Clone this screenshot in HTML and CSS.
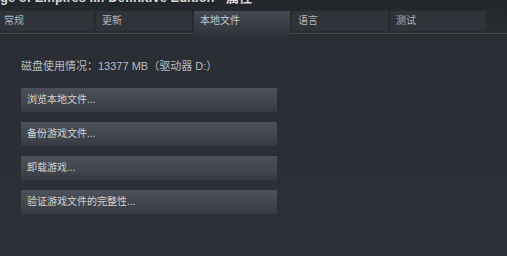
FILE: index.html
```html
<!DOCTYPE html>
<html lang="zh-CN">
<head>
  <meta charset="UTF-8" />
  <title>属性 - 本地文件</title>
  <link rel="stylesheet" href="styles.css">
</head>
<body>

  <!-- Título de la ventana (cortado) -->
  <div class="titulo">ge of Empires III: Definitive Edition - 属性</div>

  <!-- Pestañas -->
  <div class="tabs">
    <div class="tab">常规</div>
    <div class="tab">更新</div>
    <div class="tab active">本地文件</div>
    <div class="tab">语言</div>
    <div class="tab">测试</div>
  </div>

  <div class="contenido">
    <p class="disco">磁盘使用情况：13377 MB（驱动器 D:）</p>

    <div class="botones">
      <div class="boton">浏览本地文件...</div>
      <div class="boton">备份游戏文件...</div>
      <div class="boton">卸载游戏...</div>
      <div class="boton">验证游戏文件的完整性...</div>
    </div>
  </div>

</body>
</html>
```

FILE: styles.css
```css
body {
  margin: 0;
  padding: 0;
  font-family: "Liberation Sans", "Noto Sans CJK SC", sans-serif;
  background: linear-gradient(to bottom, #22252a 0px, #2a2d33 40px, #2d3137 256px);
  color: #b4b8bc;
  height: 256px;
  overflow: hidden;
}

/* Título cortado arriba */
.titulo {
  margin-top: -9px;
  height: 20px;
  line-height: 1;
  font-size: 13px;
  font-weight: bold;
  color: #d6d8da;
  overflow: hidden;
  white-space: nowrap;
}

/* Pestañas */
.tabs {
  display: flex;
  gap: 2px;
  height: 22px;
  border-bottom: 1px solid #44484e;
  margin-left: -2px;
}

.tab {
  width: 96px;
  height: 20px;
  background-color: #30343a;
  font-size: 10px;
  line-height: 20px;
  padding-left: 6px;
  box-sizing: border-box;
  color: #b0b6bc;
}

.tab.active {
  height: 30px;
  background: linear-gradient(to bottom, #454a52 0%, #353940 60%, #2a2d33 100%);
  color: #c8ccd0;
  position: relative;
  z-index: 1;
}

/* Contenido */
.contenido {
  padding: 0 21px;
}

.disco {
  margin: 24px 0 14px;
  font-size: 11px;
  line-height: 16px;
  color: #b8bcc0;
}

.botones {
  display: flex;
  flex-direction: column;
  gap: 10px;
}

.boton {
  width: 256px;
  height: 24px;
  box-sizing: border-box;
  padding-left: 6px;
  font-size: 10px;
  line-height: 24px;
  color: #d2d4d6;
  background: linear-gradient(to bottom, #4b505a 0%, #41454d 60%, #373a41 100%);
}
```
